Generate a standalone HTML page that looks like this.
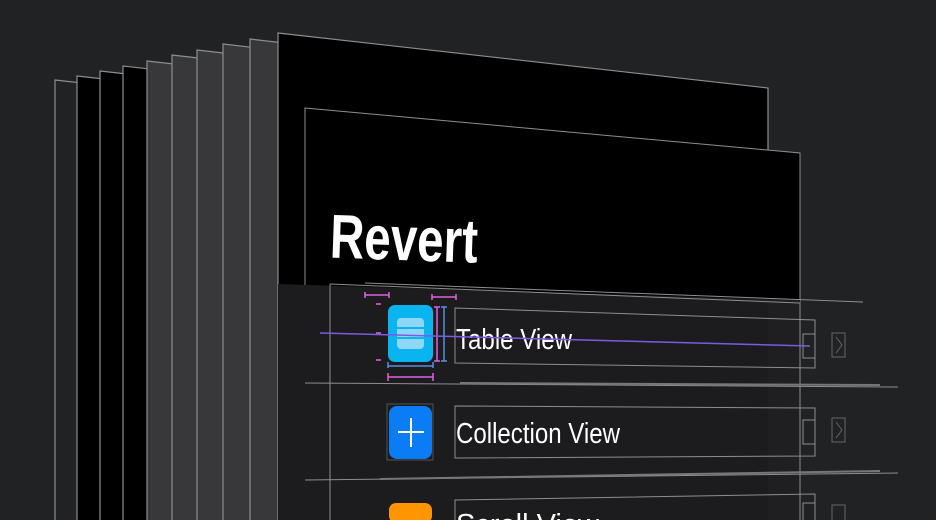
<!DOCTYPE html>
<html><head><meta charset="utf-8"><style>
html,body{margin:0;padding:0;background:#202224;width:936px;height:520px;overflow:hidden}
svg{display:block}
text{font-family:"Liberation Sans",sans-serif;fill:#fff}
</style></head><body>
<svg width="936" height="520" viewBox="0 0 936 520" xmlns="http://www.w3.org/2000/svg">
<rect width="936" height="520" fill="#202224"/>
<g stroke="#8e8e90" stroke-width="1.2">
<polygon points="55,80 900,175 900,530 55,530" fill="#202224"/>
<polygon points="77,76 900,168 900,530 77,530" fill="#000"/>
<polygon points="100,71 900,161 900,530 100,530" fill="#000"/>
<polygon points="123,66 900,155 900,530 123,530" fill="#000"/>
<polygon points="147,61 900,145 900,530 147,530" fill="#38383a"/>
<polygon points="172,55 900,137 900,530 172,530" fill="#38383a"/>
<polygon points="197,50 900,130 900,530 197,530" fill="#38383a"/>
<polygon points="223,44 900,122 900,530 223,530" fill="#38383a"/>
<polygon points="250,39 900,115 900,530 250,530" fill="#38383a"/>
</g>
<!-- area right of main black panel -->
<polygon points="768,88 936,100 936,530 768,530" fill="#202224"/>
<polygon points="278,33 768,88 768,530 278,530" fill="#000" stroke="#8e8e90" stroke-width="1.2"/>
<polygon points="305,108 800,153 800,530 305,530" fill="#000" stroke="#8e8e90" stroke-width="1"/>
<text x="330" y="260" font-size="62" font-weight="bold" textLength="148" lengthAdjust="spacingAndGlyphs" transform="rotate(2 400 240)">Revert</text>
<!-- cells region -->
<polygon points="278,284 800,300 800,530 278,530" fill="#1c1c1e"/>
<rect x="768" y="300" width="32" height="230" fill="#1f1f21"/>
<g stroke="#8e8e90" stroke-width="1" fill="none">
<line x1="365" y1="283" x2="863" y2="302"/>
<polyline points="330,284 800,303 800,530"/>
<line x1="330" y1="284" x2="330" y2="530"/>
<line x1="305" y1="383" x2="898" y2="387"/>
<line x1="305" y1="480" x2="898" y2="473"/>
<polygon points="455,308 815,320 815,368 455,363"/>
<polygon points="455,406 815,408 815,456 455,458"/>
<polygon points="455,500 815,494 815,530 455,530"/>
<rect x="803" y="334" width="12" height="24"/>
<rect x="803" y="420" width="12" height="24"/>
<rect x="803" y="503" width="12" height="24"/>
<rect x="832" y="333" width="13" height="24" stroke="#666"/>
<rect x="832" y="418" width="13" height="24" stroke="#666"/>
<rect x="832" y="505" width="13" height="20" stroke="#666"/>
<path d="M836 337 L842 345 L836 353" stroke="#666"/>
<path d="M836 422 L842 430 L836 438" stroke="#666"/>
<rect x="387" y="404" width="46" height="56" stroke="#555"/>
</g>
<line x1="460" y1="383" x2="880" y2="385" stroke="#777" stroke-width="2"/>
<line x1="380" y1="479" x2="880" y2="471" stroke="#777" stroke-width="2"/>
<!-- icons -->
<rect x="388" y="305" width="45" height="57" rx="7" fill="#0ab4f0"/>
<rect x="397" y="318" width="27" height="31" rx="4" fill="#8fd6f7"/>
<g stroke="#0ab4f0" stroke-width="2"><line x1="397" y1="328" x2="424" y2="328"/><line x1="397" y1="338" x2="424" y2="338"/></g>
<rect x="389" y="406" width="43" height="53" rx="8" fill="#0a7cf5"/>
<g stroke="#fff" stroke-width="2"><line x1="411" y1="418" x2="411" y2="447"/><line x1="398" y1="432" x2="424" y2="432"/></g>
<rect x="389" y="503" width="43" height="20" rx="7" fill="#ff9500"/>
<text x="456" y="349" font-size="29" textLength="116" lengthAdjust="spacingAndGlyphs">Table View</text>
<text x="456" y="443" font-size="29" textLength="164" lengthAdjust="spacingAndGlyphs">Collection View</text>
<text x="456" y="534" font-size="29">Scroll View</text>
<!-- measurement guides -->
<g stroke="#e060e0" stroke-width="1.5" fill="none">
<path d="M365 292v6M365 295h24M389 292v6"/>
<path d="M432 294v6M432 297h24M456 294v6"/>
<path d="M376 304h5M376 333h5M376 360h5"/>
<path d="M437 307v54M434 307h6M434 361h6"/>
<path d="M388 373v8M388 377h45M433 373v8"/>
</g>
<g stroke="#5a8ee0" stroke-width="1.5" fill="none">
<path d="M444 307v54M441 307h6M441 361h6"/>
<path d="M388 362v6M388 366h45M433 362v6"/>
</g>
<line x1="320" y1="333" x2="810" y2="346" stroke="#7a5ce0" stroke-width="1.5"/>
</svg>
</body></html>
